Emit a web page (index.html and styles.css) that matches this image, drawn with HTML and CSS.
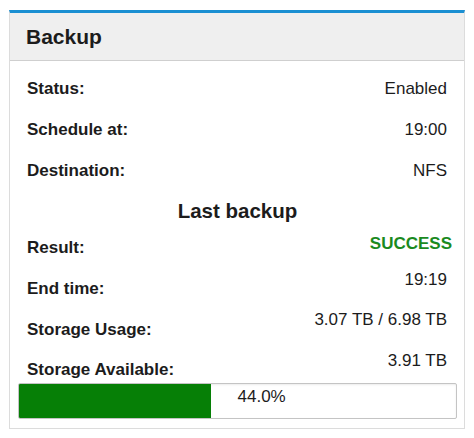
FILE: index.html
```html
<!DOCTYPE html>
<html lang="en">
<head>
  <meta charset="UTF-8" />
  <title>Backup</title>
  <link rel="stylesheet" href="styles.css">
</head>
<body>
  <div class="panel">
    <div class="panel-header">Backup</div>

    <div class="panel-body">
      <div class="info-row">
        <span class="info-label">Status:</span>
        <span class="info-value">Enabled</span>
      </div>
      <div class="info-row">
        <span class="info-label">Schedule at:</span>
        <span class="info-value">19:00</span>
      </div>
      <div class="info-row">
        <span class="info-label">Destination:</span>
        <span class="info-value">NFS</span>
      </div>

      <h3 class="section-title">Last backup</h3>

      <div class="info-row">
        <span class="info-label">Result:</span>
        <span class="info-value info-value-raised status-success">SUCCESS</span>
      </div>
      <div class="info-row">
        <span class="info-label">End time:</span>
        <span class="info-value info-value-raised">19:19</span>
      </div>
      <div class="info-row">
        <span class="info-label">Storage Usage:</span>
        <span class="info-value info-value-raised">3.07 TB / 6.98 TB</span>
      </div>
      <div class="info-row info-row-last">
        <span class="info-label">Storage Available:</span>
        <span class="info-value info-value-raised">3.91 TB</span>
      </div>

      <div class="progress">
        <div class="progress-bar" style="width: 44%"></div>
        <span class="progress-label">44.0%</span>
      </div>
    </div>
  </div>
</body>
</html>
```

FILE: styles.css
```css
* {
  margin: 0;
  padding: 0;
  box-sizing: border-box;
}

:root {
  --accent: #1b8fd2;
  --text: #1c1c1c;
  --success: #1a8a1e;
  --fill: #067f06;
  --border: #dcdcdc;
  --header-bg: #efefef;
}

body {
  font-family: "Liberation Sans", Arial, sans-serif;
  color: var(--text);
  background: #fff;
  padding: 10px 0 0 9px;
}

.panel {
  width: 456px;
  border: 1px solid var(--border);
  border-top: 3px solid var(--accent);
}

.panel-header {
  height: 48px;
  line-height: 47px;
  padding-left: 16px;
  font-size: 21px;
  font-weight: 700;
  background: var(--header-bg);
  border-bottom: 1px solid #cfcfcf;
}

.panel-body {
  padding: 8px 7px 9px 8px;
}

.info-row {
  display: flex;
  justify-content: space-between;
  align-items: flex-start;
  height: 40.7px;
  padding: 0 10px 0 9px;
  font-size: 17px;
  line-height: 20px;
}

.info-row-last {
  height: 33px;
}

.info-label {
  font-weight: 700;
  padding-top: 10.3px;
}

.info-value {
  padding-top: 10.3px;
}

.info-value-raised {
  padding-top: 1px;
}

.status-success {
  color: var(--success);
  font-weight: 700;
  padding-top: 5.5px;
  margin-right: -5px;
}

.section-title {
  font-size: 20.5px;
  font-weight: 700;
  text-align: center;
  padding-top: 1.5px;
  line-height: 35.5px;
  height: 37px;
}

.progress {
  position: relative;
  height: 36px;
  border: 1px solid #c4c4c4;
  border-radius: 2px;
  background: #fff;
  box-shadow: inset 0 1px 2px rgba(0, 0, 0, 0.08);
  overflow: hidden;
}

.progress-bar {
  height: 100%;
  background: var(--fill);
}

.progress-label {
  position: absolute;
  top: 0;
  left: 50%;
  font-size: 17px;
  line-height: 26px;
}
```
